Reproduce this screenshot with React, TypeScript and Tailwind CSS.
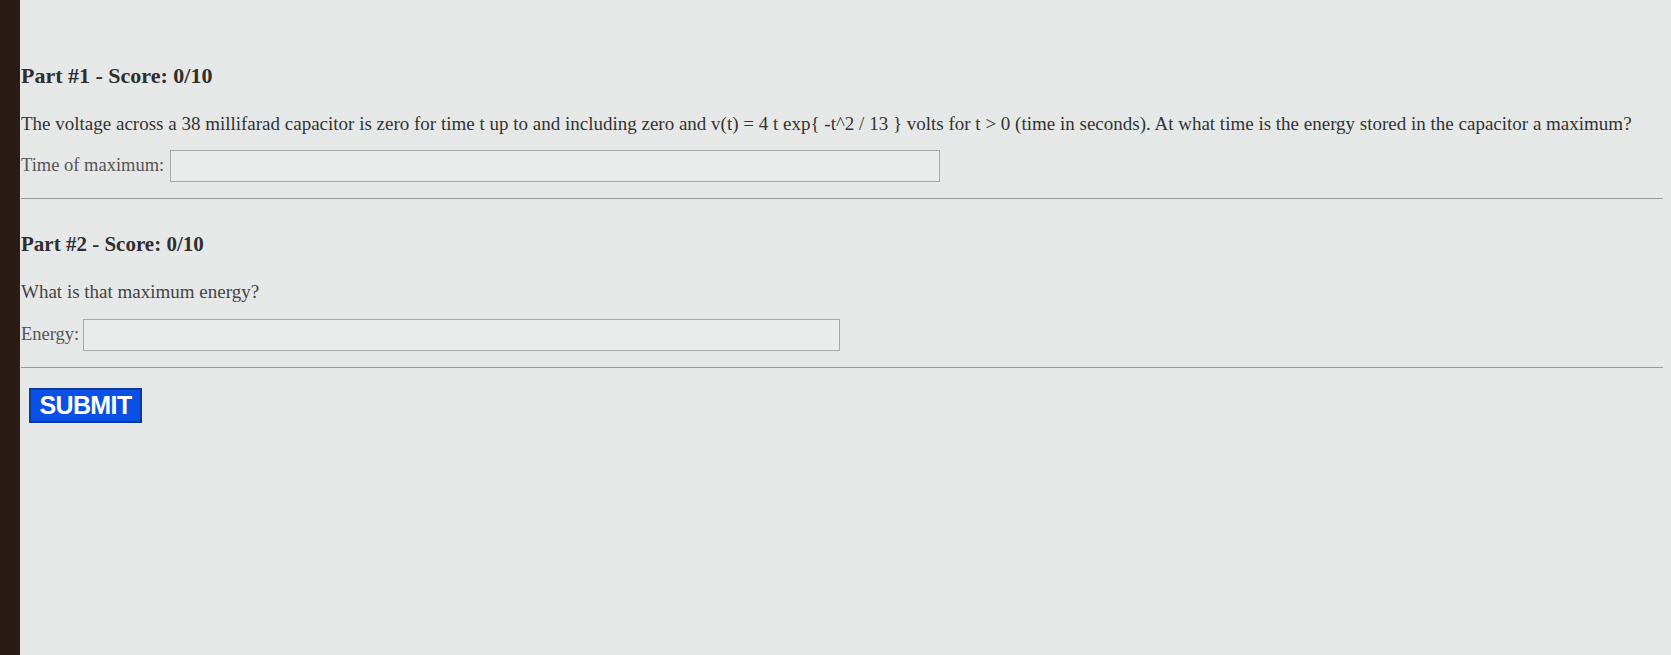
import React from "react";

export default function App() {
  const serif = { fontFamily: '"Liberation Serif", "Times New Roman", serif' };
  return (
    <div className="flex w-[1671px] h-[655px] overflow-hidden bg-[#e6e8e8]">
      <div className="w-[20px] shrink-0 bg-[#2a1c14]" />
      <div className="flex-1 pl-[1px] pr-2 text-[#3a3a3a]" style={serif}>
        <div className="pt-[62px] text-[22px] font-bold leading-[28px] text-[#2e2e2e]">
          Part #1 - Score: 0/10
        </div>
        <div className="mt-[22px] text-[19px] leading-[24px] whitespace-nowrap text-[#333]">
          The voltage across a 38 millifarad capacitor is zero for time t up to and including zero and v(t) = 4 t exp{"{"} -t^2 / 13 {"}"} volts for t &gt; 0 (time in seconds). At what time is the energy stored in the capacitor a maximum?
        </div>
        <div className="mt-[14px] flex items-center gap-[6px]">
          <span className="text-[18.5px] text-[#555]">Time of maximum:</span>
          <div className="h-[32px] w-[770px] border border-[#a8a8a8] bg-[#eaecec]" />
        </div>
        <div className="mt-[16px] border-t border-[#9a9a9a]" />
        <div className="mt-[31px] text-[21px] font-bold leading-[28px] text-[#2e2e2e]">
          Part #2 - Score: 0/10
        </div>
        <div className="mt-[22px] text-[19px] leading-[24px] text-[#444]">
          What is that maximum energy?
        </div>
        <div className="mt-[15px] flex items-center gap-[4px]">
          <span className="text-[18.5px] text-[#555]">Energy:</span>
          <div className="h-[32px] w-[757px] border border-[#a8a8a8] bg-[#eaecec]" />
        </div>
        <div className="mt-[16px] border-t border-[#9a9a9a]" />
        <div className="mt-[20px] ml-[8px]">
          <button
            className="h-[35px] w-[113px] bg-[#0a4fe6] border-2 border-[#0a3a9a] text-white text-[25px] font-bold leading-none tracking-tight"
            style={{ fontFamily: '"Liberation Sans", Arial, sans-serif' }}
          >
            SUBMIT
          </button>
        </div>
      </div>
    </div>
  );
}
